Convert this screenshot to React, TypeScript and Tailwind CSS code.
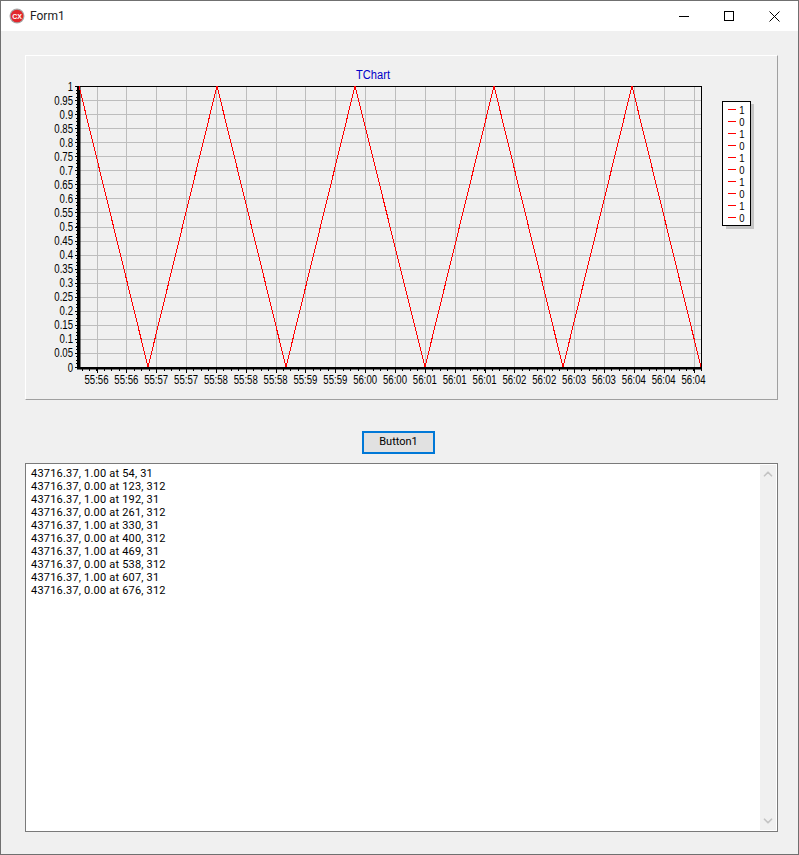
import { ChevronDown, ChevronUp } from "lucide-react";

const labelFont = '"Liberation Sans", Arial, sans-serif';
const memoLines = [
  "43716.37, 1.00 at 54, 31",
  "43716.37, 0.00 at 123, 312",
  "43716.37, 1.00 at 192, 31",
  "43716.37, 0.00 at 261, 312",
  "43716.37, 1.00 at 330, 31",
  "43716.37, 0.00 at 400, 312",
  "43716.37, 1.00 at 469, 31",
  "43716.37, 0.00 at 538, 312",
  "43716.37, 1.00 at 607, 31",
  "43716.37, 0.00 at 676, 312",
];

const timeLabels = [
  "55:56", "55:56", "55:57", "55:57", "55:58", "55:58", "55:58",
  "55:59", "55:59", "56:00", "56:00", "56:01", "56:01", "56:01",
  "56:02", "56:02", "56:03", "56:03", "56:04", "56:04", "56:04",
];
const yLabels = Array.from({ length: 21 }, (_, i) => {
  const v = (20 - i) * 5;
  if (v === 100) return "1";
  if (v === 0) return "0";
  return String(v / 100);
});
const points = [54, 123, 192, 261, 330, 400, 469, 538, 607, 676].map((x, i) => `${x},${i % 2 === 0 ? 31 : 312}`).join(" ");

// narrow bitmap look of the chart font
function labelWidth(s: string) {
  let w = 0;
  for (const c of s) w += c === "." || c === ":" ? 2.8 : 5.3;
  return w;
}

const plotLeft = 53;
const plotRight = 676;
const plotTop = 31;
const plotBottom = 312;
const gridXs = timeLabels.map((_, i) => 71.5 + i * 29.85);
const gridYs = yLabels.map((_, i) => plotTop + (i * (plotBottom - plotTop)) / 20);

function Chart() {
  return (
    <svg width="751" height="343" viewBox="1 1 751 343" className="block">
      <text x="348" y="24" fontSize="12" fill="#0000c8" textAnchor="middle" fontFamily={labelFont} textLength="34" lengthAdjust="spacingAndGlyphs">
        TChart
      </text>

      {/* grid */}
      {gridXs.map((x) => (
        <line key={x} x1={Math.round(x) + 0.5} x2={Math.round(x) + 0.5} y1={plotTop} y2={plotBottom} stroke="#bdbdbd" />
      ))}
      {gridYs.map((y) => (
        <line key={y} x1={plotLeft} x2={plotRight} y1={Math.round(y) + 0.5} y2={Math.round(y) + 0.5} stroke="#bdbdbd" />
      ))}

      {/* frame */}
      <rect x={plotLeft + 0.5} y={plotTop + 0.5} width={plotRight - plotLeft} height={plotBottom - plotTop} fill="none" stroke="#000" />

      {/* left axis */}
      <rect x={plotLeft - 1} y={plotTop} width="3.5" height={plotBottom - plotTop + 2} fill="#000" />
      {gridYs.map((y) => (
        <line key={y} x1={plotLeft - 3} x2={plotLeft} y1={Math.round(y) + 0.5} y2={Math.round(y) + 0.5} stroke="#000" />
      ))}
      {Array.from({ length: 80 }, (_, i) => plotTop + 3.5 + (i * (plotBottom - plotTop)) / 80).map((y) => (
        <line key={y} x1={plotLeft - 2} x2={plotLeft} y1={Math.round(y) + 0.5} y2={Math.round(y) + 0.5} stroke="#000" />
      ))}

      {/* bottom axis */}
      <rect x={plotLeft - 1} y={plotBottom} width={plotRight - plotLeft + 2} height="2.5" fill="#000" />
      {gridXs.map((x) => (
        <line key={x} x1={Math.round(x) + 0.5} x2={Math.round(x) + 0.5} y1={plotBottom + 2} y2={plotBottom + 6} stroke="#000" />
      ))}
      {Array.from({ length: 84 }, (_, i) => 56.5 + i * 7.4625).map((x) => (
        <line key={x} x1={Math.round(x) + 0.5} x2={Math.round(x) + 0.5} y1={plotBottom + 2} y2={plotBottom + 4} stroke="#000" />
      ))}

      {/* series */}
      <polyline points={points} fill="none" stroke="#ff0000" strokeWidth="1" shapeRendering="crispEdges" />

      {/* y labels */}
      {yLabels.map((l, i) => (
        <text key={l} x={plotLeft - 5} y={gridYs[i] + 4.5} fontSize="12.5" fill="#000" textAnchor="end" fontFamily={labelFont} textLength={labelWidth(l)} lengthAdjust="spacingAndGlyphs">
          {l}
        </text>
      ))}

      {/* x labels */}
      {timeLabels.map((l, i) => (
        <text key={i} x={gridXs[i]} y={plotBottom + 17} fontSize="12.5" fill="#000" textAnchor="middle" fontFamily={labelFont} textLength={labelWidth(l)} lengthAdjust="spacingAndGlyphs">
          {l}
        </text>
      ))}

      {/* legend */}
      <rect x="701" y="49" width="28" height="125" fill="#c4c4c4" />
      <rect x="697.5" y="46.5" width="28" height="124" fill="#fff" stroke="#000" />
      {Array.from({ length: 10 }, (_, i) => (
        <g key={i}>
          <line x1="703" x2="711" y1={54.5 + i * 12} y2={54.5 + i * 12} stroke="#ff0000" />
          <text x="717" y={58.5 + i * 12} fontSize="11" fill="#000" textAnchor="middle" fontFamily={labelFont} textLength="5.3" lengthAdjust="spacingAndGlyphs">
            {i % 2 === 0 ? "1" : "0"}
          </text>
        </g>
      ))}
    </svg>
  );
}

export default function App() {
  return (
    <div className="flex flex-col w-[799px] h-[855px] border border-[#707070] bg-[#f0f0f0] font-['Roboto',sans-serif] text-[11px] text-black overflow-hidden">
      {/* Title bar */}
      <div className="flex items-center h-[30px] shrink-0 bg-white pl-[8px]">
        <svg width="16" height="16" viewBox="0 0 16 16" className="shrink-0">
          <circle cx="8" cy="8" r="7.5" fill="#a8a8a8" />
          <circle cx="8" cy="8" r="6.3" fill="#e2262c" />
          <text x="8" y="10.5" fontSize="7" fontWeight="700" fill="#fff" textAnchor="middle" fontFamily={labelFont}>
            CX
          </text>
        </svg>
        <span className="ml-[5px] text-[12px] text-[#222]">Form1</span>
        <div className="flex ml-auto">
          <div className="flex items-center justify-center w-[45px] h-[30px]">
            <div className="w-[10px] h-px bg-black" />
          </div>
          <div className="flex items-center justify-center w-[45px] h-[30px]">
            <div className="w-[10px] h-[10px] border border-black" />
          </div>
          <div className="flex items-center justify-center w-[47px] h-[30px]">
            <svg width="11" height="11" viewBox="0 0 11 11">
              <path d="M0.5 0.5 L10.5 10.5 M10.5 0.5 L0.5 10.5" stroke="#000" strokeWidth="1" fill="none" />
            </svg>
          </div>
        </div>
      </div>

      <div className="flex flex-col flex-1 pl-[24px] pr-[20px] pt-[24px]">
        {/* Chart panel */}
        <div className="h-[345px] border border-t-white border-l-white border-r-[#a0a0a0] border-b-[#a0a0a0]">
          <Chart />
        </div>

        {/* Button */}
        <div className="flex mt-[31px] pl-[337px]">
          <button className="flex items-center justify-center w-[73px] h-[23px] border-2 border-[#0078d7] bg-[#e1e1e1] text-[11px] text-black">
            Button1
          </button>
        </div>

        {/* Memo */}
        <div className="flex h-[369px] mt-[9px] border border-[#7a7a7a] bg-white">
          <div className="flex-1 pl-[5px] pt-[3px] leading-[13px] tracking-[0.2px] whitespace-pre">
            {memoLines.map((l, i) => (
              <div key={i}>{l}</div>
            ))}
          </div>
          <div className="flex flex-col justify-between items-center w-[16px] my-px mr-px bg-[#f0f0f0] py-[2px]">
            <ChevronUp size={14} strokeWidth={3} className="text-[#c4c4c4]" />
            <ChevronDown size={14} strokeWidth={3} className="text-[#c4c4c4]" />
          </div>
        </div>
      </div>
    </div>
  );
}
